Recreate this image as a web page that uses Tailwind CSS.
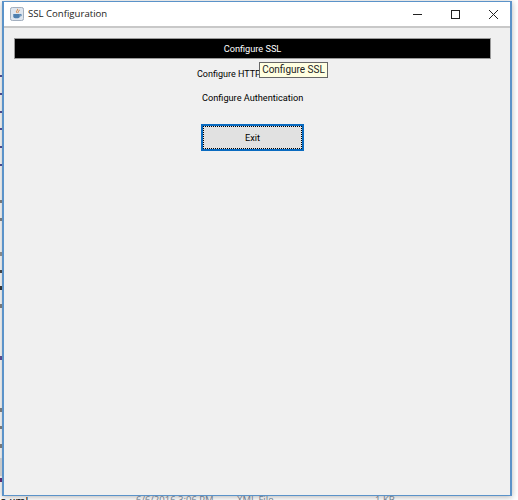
<!DOCTYPE html>
<html lang="en">

<head>
    <meta charset="UTF-8">
    <title>SSL Configuration</title>
    <script src="https://cdn.jsdelivr.net/npm/@tailwindcss/browser@4"></script>
</head>

<body class="bg-white">
    <div class="relative w-[518px] h-[500px] overflow-hidden bg-white font-['Open_Sans',sans-serif]">
        <!-- Window -->
        <div class="ml-[2px] mt-[1px] w-[510px] h-[495px] flex flex-col border border-[#5b93c9] border-l-2 border-r-2 bg-[#f0f0f0] shadow-[0_1px_6px_rgba(0,0,0,0.3)]">
            <!-- Title bar -->
            <div class="h-[26px] flex items-center bg-white border-b-2 border-[#c8c8c8] shrink-0">
                <svg class="ml-[6px] w-[14px] h-[14px]" viewBox="0 0 15 15">
                    <rect x="0.5" y="0.5" width="14" height="14" rx="2" fill="#dfe6ef" stroke="#9aa7b8" />
                    <path d="M8 2c1 1.500-2 2.500-1 4M10 3c0 1.500-2 2-1.500 3.500" fill="none" stroke="#d9792a" stroke-width="1" />
                    <path d="M3.500 7.500h7v2.500a2 2 0 0 1-2 2h-3a2 2 0 0 1-2-2z" fill="#4f7fae" />
                    <path d="M10.500 8h1.500v1.500h-1.500" fill="none" stroke="#4f7fae" />
                </svg>
                <span class="ml-[4px] text-[9.6px] leading-none text-[#222]">SSL Configuration</span>
                <div class="ml-auto flex items-center">
                    <svg class="w-[38px] h-[24px]" viewBox="0 0 38 24"><path d="M14 12.500h9" stroke="#222" /></svg>
                    <svg class="w-[38px] h-[24px]" viewBox="0 0 38 24"><rect x="14.500" y="8.500" width="8" height="8" fill="none" stroke="#222" /></svg>
                    <svg class="w-[35px] h-[24px]" viewBox="0 0 35 24"><path d="M14 8l9 9M23 8l-9 9" stroke="#222" /></svg>
                </div>
            </div>

            <!-- Content -->
            <div class="flex flex-col items-start pt-[10px] pl-[10px] font-['Roboto',sans-serif] text-[9.2px] leading-none text-black">
                <div class="w-[477px] h-[21px] flex items-center justify-center bg-black text-white border border-[#999]">Configure SSL</div>
                <div class="mt-[11px] ml-[183px] h-[10px] text-[9px] whitespace-nowrap">Configure HTTP</div>
                <div class="mt-[13px] ml-[188px] h-[10px]">Configure Authentication</div>
                <button class="mt-[21px] ml-[187px] w-[103px] h-[27px] flex items-center justify-center bg-[#e1e1e1] border-2 border-[#0a6bc0] outline-1 outline-dotted outline-black outline-offset-[-3px] text-black">Exit</button>
            </div>
        </div>

        <!-- Tooltip -->
        <div class="absolute left-[259px] top-[62px] w-[69px] h-[16px] flex items-center justify-center bg-[#ffffe1] border border-[#666] text-[10px] leading-none text-[#222] font-['Roboto',sans-serif]">Configure SSL</div>

        <!-- bits of the explorer list behind the window -->
        <div class="absolute left-0 top-[75px] w-[2px] h-[2px] bg-[#4a4a8a]"></div>
        <div class="absolute left-0 top-[93px] w-[2px] h-[2px] bg-[#4a4a8a]"></div>
        <div class="absolute left-0 top-[111px] w-[2px] h-[2px] bg-[#4a4a8a]"></div>
        <div class="absolute left-0 top-[128px] w-[2px] h-[2px] bg-[#4a4a8a]"></div>
        <div class="absolute left-0 top-[146px] w-[2px] h-[2px] bg-[#4a4a8a]"></div>
        <div class="absolute left-0 top-[164px] w-[2px] h-[2px] bg-[#4a4a8a]"></div>
        <div class="absolute left-0 top-[200px] w-[2px] h-[3px] bg-[#777]"></div>
        <div class="absolute left-0 top-[218px] w-[2px] h-[3px] bg-[#777]"></div>
        <div class="absolute left-0 top-[252px] w-[2px] h-[4px] bg-[#888]"></div>
        <div class="absolute left-0 top-[270px] w-[2px] h-[3px] bg-[#444]"></div>
        <div class="absolute left-0 top-[286px] w-[2px] h-[4px] bg-[#333]"></div>
        <div class="absolute left-0 top-[304px] w-[2px] h-[4px] bg-[#777]"></div>
        <div class="absolute left-0 top-[356px] w-[2px] h-[4px] bg-[#5a4a8a]"></div>
        <div class="absolute left-0 top-[408px] w-[2px] h-[4px] bg-[#777]"></div>
        <div class="absolute left-0 top-[426px] w-[2px] h-[3px] bg-[#777]"></div>
        <div class="absolute left-0 top-[444px] w-[2px] h-[4px] bg-[#777]"></div>
        <div class="absolute left-0 top-[458px] w-[2px] h-[18px] bg-[#c9c9c9]"></div>
        <div class="absolute left-0 top-[478px] w-[2px] h-[4px] bg-[#5a2a6a]"></div>

        <!-- Row of the file list below the window -->
        <div class="relative h-[4px] text-[9.5px] leading-none font-['Open_Sans',sans-serif]">
            <span class="absolute left-0 top-[-1px] text-[11px] text-black">o.xml</span>
            <span class="absolute left-[136px] top-[-1px] text-[#6d7a8c]">6/6/2016 3:06 PM</span>
            <span class="absolute left-[237px] top-[-1px] text-[#6d7a8c]">XML File</span>
            <span class="absolute left-[375px] top-[-1px] text-[#6d7a8c]">1 KB</span>
        </div>
    </div>
</body>

</html>
